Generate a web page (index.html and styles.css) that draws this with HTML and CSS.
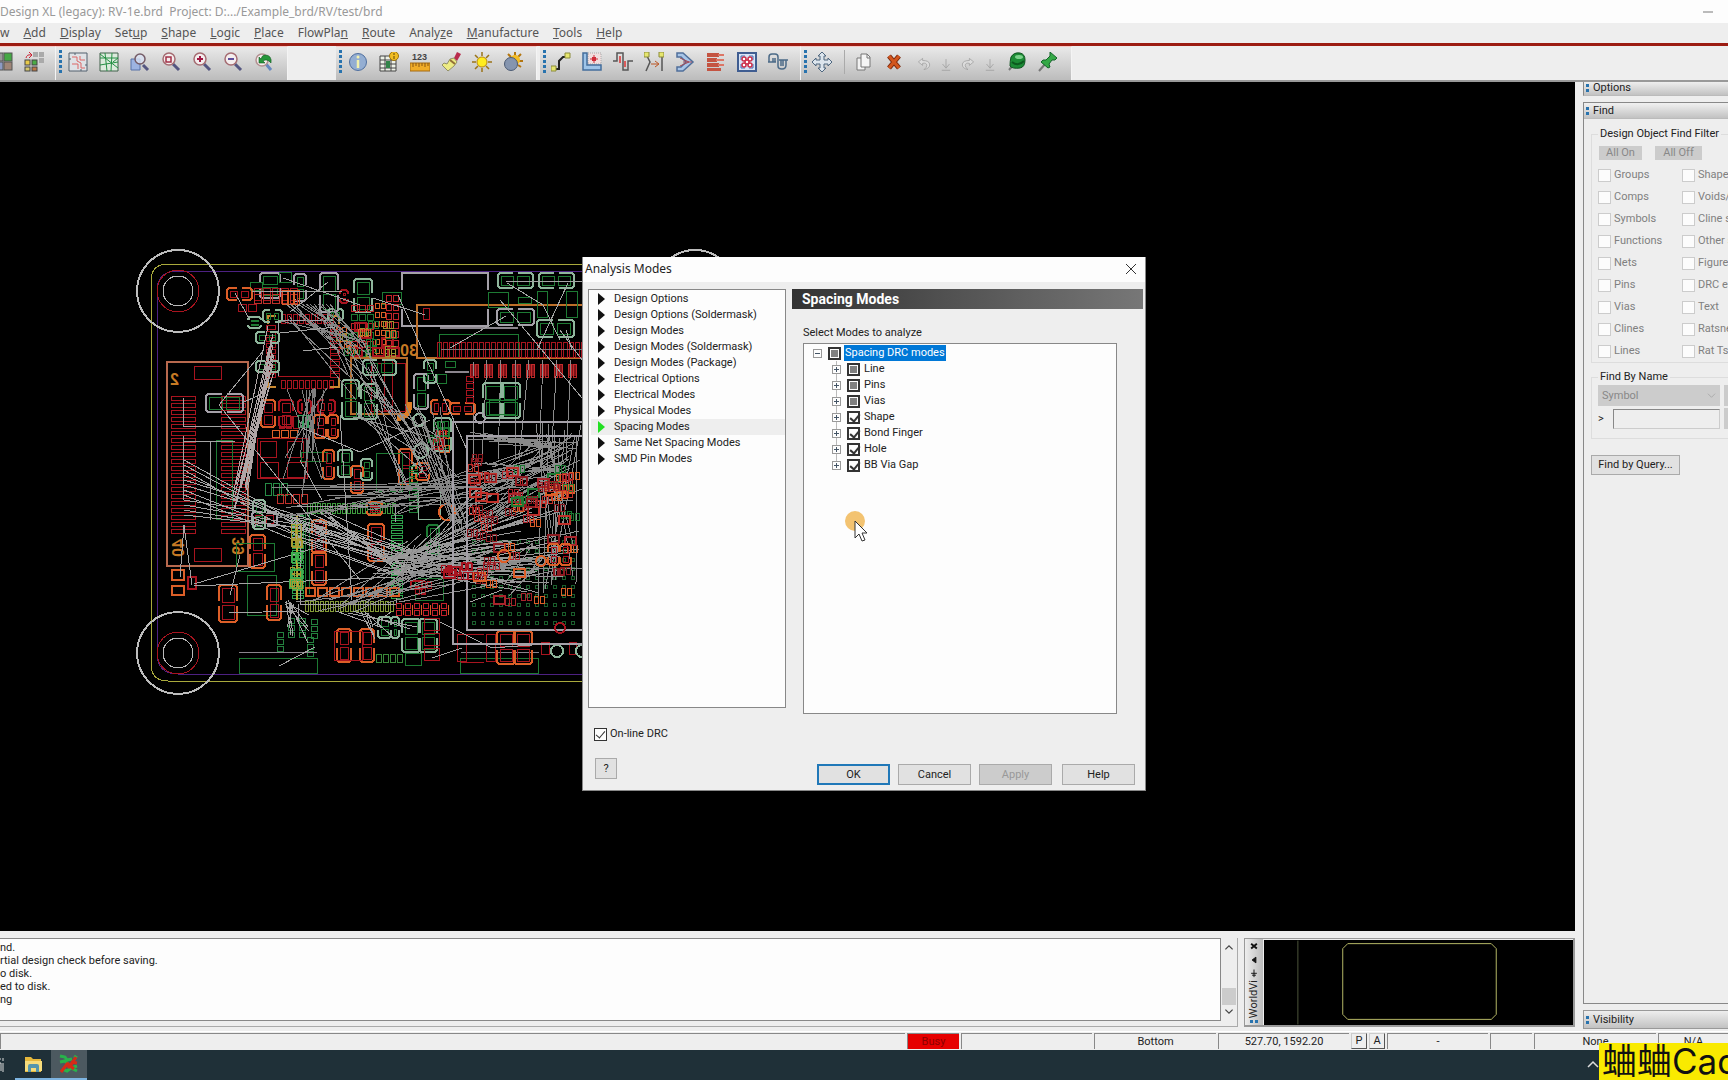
FILE: index.html
```html
<!DOCTYPE html>
<html lang="en">

<head>
    <meta charset="UTF-8">
    <title>RV-1e.brd</title>
    <link rel="stylesheet" href="styles.css">
</head>

<body>
    <header class="titlebar">
        <span>Design XL (legacy): RV-1e.brd&nbsp; Project: D:.../Example_brd/RV/test/brd</span>
        <button class="minimize" aria-label="Minimize"></button>
    </header>

    <nav class="menubar">
        <button>w</button>
        <button><u>A</u>dd</button>
        <button><u>D</u>isplay</button>
        <button>Set<u>u</u>p</button>
        <button><u>S</u>hape</button>
        <button><u>L</u>ogic</button>
        <button><u>P</u>lace</button>
        <button>FlowPla<u>n</u></button>
        <button><u>R</u>oute</button>
        <button>Analy<u>z</u>e</button>
        <button><u>M</u>anufacture</button>
        <button><u>T</u>ools</button>
        <button><u>H</u>elp</button>
    </nav>

    <div class="toolbars">
        <div class="toolbar toolbar-start">
            <button aria-label="Design mode"><svg viewBox="0 0 20 20"><g stroke="#555"><rect x="1" y="1" width="8" height="8" fill="#999"/><rect x="10" y="1" width="8" height="8" fill="#45a845"/><rect x="1" y="10" width="8" height="8" fill="#8d9bc4"/><rect x="10" y="10" width="8" height="8" fill="#a08678"/></g></svg></button>
            <button aria-label="Placement mode"><svg viewBox="0 0 20 20"><path d="M9 0h5v5H9zM15 0h5v5h-5zM15 6h5v5h-5z" fill="#aaa"/><g stroke="#444"><rect x="1" y="8" width="5" height="5" fill="#e7c948"/><rect x="8" y="8" width="5" height="5" fill="#4bab45"/><rect x="1" y="15" width="5" height="4" fill="#d3c56d"/><rect x="8" y="15" width="5" height="4" fill="#bd7845"/></g><path d="M2 6q1-4 5-3M5 0l3 3-3 3" fill="none" stroke="#c23"/></svg></button>
        </div>
        <div class="toolbar">
            <i class="grip"></i>
            <button aria-label="Unrats all"><svg viewBox="0 0 20 20"><path d="M1 1h18v18H1z" fill="#dfe2e6" stroke="#52616f"/><path d="M4 5h5v4M12 4v4h5M4 12h6v5M13 11v5h4M9 9l4 2" fill="none" stroke="#d66"/><path d="M1 7h2M7 1v2M17 13h2M13 17v2" stroke="#52616f"/></svg></button>
            <button aria-label="Rats all"><svg viewBox="0 0 20 20"><path d="M1 1h18v18H1z" fill="#dcebdd" stroke="#40604b"/><path d="M1 6h18M1 13l18-3M6 1l2 18M13 1l-1 18M1 2l18 14M14 10l5-4" fill="none" stroke="#249044"/></svg></button>
            <button aria-label="Zoom points"><svg viewBox="0 0 20 20"><path d="M1 7h9v11H1z" fill="#9db4e2" stroke="#5873a8"/><path d="M13 13l5 5" stroke="#545681" stroke-width="3"/><circle cx="10" cy="7" r="5" fill="#d8e1f2" fill-opacity=".8" stroke="#755c67" stroke-width="1.500"/></svg></button>
            <button aria-label="Zoom fit"><svg viewBox="0 0 20 20"><path d="M12 12l6 6" stroke="#545681" stroke-width="3"/><circle cx="8" cy="7" r="6" fill="#f4eeee" stroke="#a56c72" stroke-width="1.500"/><path d="M5 5h5v5H5z" fill="none" stroke="#a23048" stroke-width="1.500"/></svg></button>
            <button aria-label="Zoom in"><svg viewBox="0 0 20 20"><path d="M12 12l6 6" stroke="#545681" stroke-width="3"/><circle cx="8" cy="7" r="6" fill="#f4eeee" stroke="#a56c72" stroke-width="1.500"/><path d="M5 7h6M8 4v6" stroke="#a21742" stroke-width="2"/></svg></button>
            <button aria-label="Zoom out"><svg viewBox="0 0 20 20"><path d="M12 12l6 6" stroke="#545681" stroke-width="3"/><circle cx="8" cy="7" r="6" fill="#f4eeee" stroke="#a56c72" stroke-width="1.500"/><path d="M5 7h6" stroke="#5f4e9d" stroke-width="2"/></svg></button>
            <button aria-label="Zoom previous"><svg viewBox="0 0 20 20"><path d="M12 12l5 6" stroke="#6687bf" stroke-width="3"/><circle cx="8" cy="8" r="6" fill="#f4eeee" stroke="#b39091" stroke-width="1.500"/><path d="M5 5v6h6L9 9q4-3 8 2 1-8-6-8-3 0-4 4z" fill="#25963a" stroke="#155d25" stroke-width=".6"/></svg></button>
        </div>
        <div class="toolbar-gap"></div>
        <div class="toolbar">
            <i class="grip"></i>
            <button aria-label="Show element"><svg viewBox="0 0 20 20"><circle cx="10" cy="10" r="8.500" fill="#94aed2" stroke="#4f6f9f"/><circle cx="10" cy="5" r="1.500" fill="#f4f2ac"/><path d="M10 8v8" stroke="#f4f2ac" stroke-width="2.500"/></svg></button>
            <button aria-label="Constraint manager"><svg viewBox="0 0 20 20"><path d="M1 4h16v15H1z" fill="#edf1e7" stroke="#444"/><path d="M1 8h16M1 12h16M1 16h16M6 4v15M12 4v15" stroke="#444"/><path d="M7 9h4v7H7z" fill="#328548"/><circle cx="15" cy="4" r="4.500" fill="#f1bd23" stroke="#9b7310"/><path d="M15 1v2M15 4v3" stroke="#5f4607"/></svg></button>
            <button aria-label="Measure"><svg viewBox="0 0 20 20"><text x="2" y="8" class="measure-text">123</text><path d="M0 11h20v8H0z" fill="#f0ac28" stroke="#a46b13"/><path d="M3 11v4M6 11v3M9 11v4M12 11v3M15 11v4M18 11v3" stroke="#885412"/></svg></button>
            <button aria-label="Color"><svg viewBox="0 0 20 20"><path d="M13 6l3-6 4 2-4 7z" fill="#b92c4d"/><path d="M9 7l4-1 3 4-3 4-6 5-6-6 2-2 3 1z" fill="#edeb84" stroke="#716f4a" stroke-width=".7"/><path d="M9 8l5 4" stroke="#947137" stroke-width="2"/></svg></button>
            <button aria-label="Shadow on"><svg viewBox="0 0 20 20"><path d="M10 0v4M10 16v4M0 10h4M16 10h4M3 3l3 3M14 14l3 3M3 17l3-3M14 6l3-3" stroke="#9a7318" stroke-width="1.500"/><circle cx="10" cy="10" r="5" fill="#ffec20" stroke="#bd8c0c"/></svg></button>
            <button aria-label="Shadow off"><svg viewBox="0 0 20 20"><path d="M12 0v4M16 9h4M5 2l3 3M15 5l3-3M15 13l3 2" stroke="#b3750f" stroke-width="2"/><circle cx="12" cy="8" r="5" fill="#f4bd24"/><circle cx="8" cy="12" r="6.500" fill="#8595af" stroke="#4c5b74"/></svg></button>
        </div>
        <div class="toolbar toolbar-route">
            <i class="grip"></i>
            <button aria-label="Add connect"><svg viewBox="0 0 20 20"><path d="M4 17h4V9l4-4h4" fill="none" stroke="#222" stroke-width="2"/><path d="M0 14h5v5H0zM14 1h5v5h-5z" fill="#e6e66e" stroke="#8b8b3a"/></svg></button>
            <button aria-label="Slide"><svg viewBox="0 0 20 20"><path d="M6 1h13v11H6z" fill="#f0dede" stroke="#aaa" stroke-dasharray="1 1"/><path d="M1 1h4v12h14v5H1z" fill="#9ec4e8" stroke="#446e9c" stroke-width="1.500"/><path d="M12 3v8M8 7h8" stroke="#d02c38"/><path d="M10 5h4v4h-4z" fill="#d02c38"/></svg></button>
            <button aria-label="Delay tune"><svg viewBox="0 0 20 20"><path d="M0 9h4V1h6v17h5V9h5" fill="none" stroke="#555" stroke-width="1.500"/><path d="M7 4v7M12 9v6" stroke="#d33" stroke-width="1.500"/></svg></button>
            <button aria-label="Custom smooth"><svg viewBox="0 0 20 20"><path d="M3 4l3 6-4 9M18 4v15" fill="none" stroke="#555" stroke-width="1.500"/><path d="M0 0h5v5H0zM15 0h5v5h-5z" fill="#e6e66e" stroke="#8b8b3a"/><path d="M7 12h7M11 9l4 3-4 3" fill="none" stroke="#b52"/></svg></button>
            <button aria-label="Vertex"><svg viewBox="0 0 20 20"><path d="M2 1h6l10 9-10 9H2v-4h4l5-5-5-5H2z" fill="#a8c5e8" stroke="#506f9a" stroke-width="1.500"/><path d="M5 6l9 4-9 4M8 10h9" fill="none" stroke="#a34b59"/></svg></button>
            <button aria-label="Spread"><svg viewBox="0 0 20 20"><path d="M1 1h12v4H1zM1 6h10v4H1zM1 11h12v4H1zM1 16h14v3H1z" fill="#c45442"/><path d="M12 3h6M10 8h8M12 13h6" stroke="#dc7565" stroke-width="2"/></svg></button>
            <button aria-label="Fanout"><svg viewBox="0 0 20 20"><path d="M1 1h18v18H1z" fill="#d8e4f5" stroke="#3f5d91" stroke-width="2"/><path d="M4 8V4h4M12 4h4v4M4 12v4h4M12 16h4v-4" fill="none" stroke="#456db2"/><g fill="#fff" stroke="#ce304b" stroke-width="1.500"><circle cx="7" cy="7" r="2"/><circle cx="13" cy="7" r="2"/><circle cx="7" cy="13" r="2"/><circle cx="13" cy="13" r="2"/><circle cx="10" cy="10" r="2"/></g></svg></button>
            <button aria-label="Phase tune"><svg viewBox="0 0 20 20"><path d="M1 10V5q0-3 3-3h3q3 0 3 3v9q0 3 4 3t4-4V8M5 10V6M7 10V6M13 8v6M15 8v6M0 10h8M11 8h9" fill="none" stroke="#4b6a87" stroke-width="1.500"/></svg></button>
        </div>
        <div class="toolbar toolbar-edit">
            <i class="grip"></i>
            <button aria-label="Move"><svg viewBox="0 0 20 20"><path d="M10 0l4 4h-2v4h4V6l4 4-4 4v-2h-4v4h2l-4 4-4-4h2v-4H4v2l-4-4 4-4v2h4V4H6z" fill="#dce5ed" stroke="#4f677f"/></svg></button>
            <i class="separator"></i>
            <button aria-label="Copy"><svg viewBox="0 0 20 20"><path d="M4 6h8v12H4z" fill="#f2f2f2" stroke="#777"/><path d="M8 2h6l3 3v10H8z" fill="#f5f5f5" stroke="#777"/><path d="M14 2v4h3" fill="none" stroke="#777"/></svg></button>
            <button aria-label="Delete"><svg viewBox="0 0 20 20"><path d="M5 4l10 12M15 4L5 16" stroke="#7a2a10" stroke-width="5"/><path d="M5 4l10 12M15 4L5 16" stroke="#d3561d" stroke-width="3"/></svg></button>
            <span class="history">
                <button aria-label="Undo"><svg viewBox="0 0 20 20"><path d="M8 2L2 7l6 5V9q6-1 6 3 0 3-4 6 9-2 8-8-1-5-10-5z" fill="#ddd" stroke="#999"/></svg></button>
                <button aria-label="Undo list"><svg viewBox="0 0 20 20"><path d="M10 3v12M5 10l5 6 5-6M4 19h12" fill="none" stroke="#999"/></svg></button>
                <button aria-label="Redo"><svg viewBox="0 0 20 20"><path d="M12 2l6 5-6 5V9q-6-1-6 3 0 3 4 6-9-2-8-8 1-5 10-5z" fill="#ddd" stroke="#999"/></svg></button>
                <button aria-label="Redo list"><svg viewBox="0 0 20 20"><path d="M10 3v12M5 10l5 6 5-6M4 19h12" fill="none" stroke="#999"/></svg></button>
            </span>
            <button aria-label="Done"><svg viewBox="0 0 20 20"><path d="M2 18l5-6" stroke="#777" stroke-width="2"/><path d="M4 5q3-5 9-4 5 1 5 7 0 7-5 8-8 1-10-2 0-5 1-9z" fill="#1c8b35" stroke="#105320"/><path d="M5 10q6 5 12-1" fill="none" stroke="#0c5a1e" stroke-width="2"/><ellipse cx="12" cy="5" rx="4" ry="2" fill="#7bd18a"/></svg></button>
            <button aria-label="Fix"><svg viewBox="0 0 20 20"><path d="M1 19l7-8" stroke="#777" stroke-width="2"/><path d="M12 0l7 6-2 2h-3l-3 4 1 3-2 1-7-6 2-2h3l4-4z" fill="#35a947" stroke="#14652a"/></svg></button>
        </div>
    </div>

    <main class="workspace">
        <div class="editor">
            <svg id="board" class="board"></svg>
            <div class="dock">
                <section class="console">
                    <div class="log" role="log">
                        <div>nd.</div>
                        <div>rtial design check before saving.</div>
                        <div>o disk.</div>
                        <div>ed to disk.</div>
                        <div>ng</div>
                    </div>
                    <div class="scrollbar">
                        <svg viewBox="0 0 10 10"><path d="M2 7l3-3 3 3" /></svg>
                        <i class="thumb"></i>
                        <svg viewBox="0 0 10 10"><path d="M2 3l3 3 3-3" /></svg>
                    </div>
                </section>
                <section class="worldview">
                    <div class="worldview-bar">
                        <svg viewBox="0 0 10 40"><path d="M2 3l6 5M8 3L2 8" stroke="#111" stroke-width="2"/><path d="M7 17v6l-4-3zM5 30v8M2 34h6M3 36h4" fill="#111" stroke="#111"/></svg>
                        <span>WorldVi</span>
                        <i class="dots"></i>
                    </div>
                    <svg class="worldview-map" viewBox="0 0 310 84">
                        <path d="M34 0v84" stroke="#4c543a" />
                        <path d="M84 3h144l5 5v66l-5 5H84l-5-5V8z" fill="none" stroke="#b5b765" />
                    </svg>
                </section>
            </div>
        </div>

        <aside class="sidebar">
            <h2 class="panel-title panel-options"><i class="dots"></i>Options</h2>
            <section class="find-panel">
                <h2 class="panel-title"><i class="dots"></i>Find</h2>
                <div class="find-body">
                    <fieldset class="filter">
                        <legend>Design Object Find Filter</legend>
                        <div class="filter-buttons">
                            <button disabled>All On</button>
                            <button disabled>All Off</button>
                        </div>
                        <div class="filter-grid">
                            <label><input type="checkbox" disabled>Groups</label>
                            <label><input type="checkbox" disabled>Shapes</label>
                            <label><input type="checkbox" disabled>Comps</label>
                            <label><input type="checkbox" disabled>Voids/Cavities</label>
                            <label><input type="checkbox" disabled>Symbols</label>
                            <label><input type="checkbox" disabled>Cline segs</label>
                            <label><input type="checkbox" disabled>Functions</label>
                            <label><input type="checkbox" disabled>Other segs</label>
                            <label><input type="checkbox" disabled>Nets</label>
                            <label><input type="checkbox" disabled>Figures</label>
                            <label><input type="checkbox" disabled>Pins</label>
                            <label><input type="checkbox" disabled>DRC errors</label>
                            <label><input type="checkbox" disabled>Vias</label>
                            <label><input type="checkbox" disabled>Text</label>
                            <label><input type="checkbox" disabled>Clines</label>
                            <label><input type="checkbox" disabled>Ratsnests</label>
                            <label><input type="checkbox" disabled>Lines</label>
                            <label><input type="checkbox" disabled>Rat Ts</label>
                        </div>
                    </fieldset>
                    <fieldset class="by-name">
                        <legend>Find By Name</legend>
                        <div class="by-name-row">
                            <div class="select-box">
                                <select aria-label="Object type" disabled><option>Symbol</option></select>
                                <svg viewBox="0 0 10 10"><path d="M1 3l4 4 4-4" /></svg>
                            </div>
                            <button disabled aria-label="Name or list"></button>
                        </div>
                        <div class="by-name-row">
                            <label for="findName">&gt;</label>
                            <input type="text" id="findName">
                            <button disabled aria-label="More"></button>
                        </div>
                    </fieldset>
                    <button class="query-button">Find by Query...</button>
                </div>
            </section>
            <h2 class="panel-title panel-visibility"><i class="dots"></i>Visibility</h2>
        </aside>
    </main>

    <footer class="statusbar">
        <span class="cell cell-fill"></span>
        <span class="cell busy">Busy</span>
        <span class="cell cell-wide"></span>
        <span class="cell cell-layer">Bottom</span>
        <span class="cell cell-wide">527.70, 1592.20</span>
        <button>P</button>
        <button>A</button>
        <span class="cell cell-mode">-</span>
        <span class="cell cell-short"></span>
        <span class="cell cell-layer">None</span>
        <span class="cell cell-na">N/A</span>
    </footer>

    <div class="taskbar">
        <button class="task task-view" aria-label="Task view"><svg viewBox="0 0 4 20"><path d="M0 4h1M0 8h1v8M3 3v3M3 8v9" stroke="#ddd" fill="none"/></svg></button>
        <button class="task task-open" aria-label="File Explorer"><svg viewBox="0 0 20 20"><path d="M2 3h6l2 2h8v13H2z" fill="#e6b83c"/><path d="M2 7h17v10H2z" fill="#f6dc7c"/><path d="M5 18v-6q0-2 2-2h7q2 0 2 2v6h-3v-4H8v4z" fill="#5496ad"/></svg></button>
        <button class="task task-active" aria-label="PCB Editor"><svg viewBox="0 0 20 20"><path d="M1 2l5 1 2 3 5-1M1 8l5-1 3 3M12 14l6-2M3 15l5 2 4-3 6 3M15 2l3 2" fill="none" stroke="#28b34b" stroke-width="3"/><path d="M2 18l6-8 4 1 5-8M8 9l7 6M9 14l4-5M12 8l6 1" stroke="#d62a17" stroke-width="3" fill="none"/></svg></button>
        <svg class="tray-arrow" viewBox="0 0 12 12"><path d="M1 8l5-5 5 5" fill="none" stroke="#ddd" stroke-width="1.500"/></svg>
    </div>

    <div class="watermark">蛐蛐Cad</div>

    <form class="dialog" role="dialog" aria-labelledby="dialogTitle">
        <div class="dialog-title">
            <span id="dialogTitle">Analysis Modes</span>
            <button type="button" aria-label="Close"><svg viewBox="0 0 12 12"><path d="M1 1l10 10M11 1L1 11" stroke="#333" /></svg></button>
        </div>
        <div class="dialog-body">
            <div class="dialog-left">
                <ul class="mode-list">
                    <li>Design Options</li>
                    <li>Design Options (Soldermask)</li>
                    <li>Design Modes</li>
                    <li>Design Modes (Soldermask)</li>
                    <li>Design Modes (Package)</li>
                    <li>Electrical Options</li>
                    <li>Electrical Modes</li>
                    <li>Physical Modes</li>
                    <li class="current">Spacing Modes</li>
                    <li>Same Net Spacing Modes</li>
                    <li>SMD Pin Modes</li>
                </ul>
                <label class="online"><input type="checkbox" checked>On-line DRC</label>
                <button type="button" class="hint">?</button>
            </div>
            <div class="dialog-right">
                <h1>Spacing Modes</h1>
                <p>Select Modes to analyze</p>
                <ul class="tree">
                    <li><i class="expander minus"></i><label><input type="checkbox" class="partial"><span class="selected">Spacing DRC modes</span></label>
                        <ul>
                            <li><i class="expander"></i><label><input type="checkbox" class="partial"><span>Line</span></label></li>
                            <li><i class="expander"></i><label><input type="checkbox" class="partial"><span>Pins</span></label></li>
                            <li><i class="expander"></i><label><input type="checkbox" class="partial"><span>Vias</span></label></li>
                            <li><i class="expander"></i><label><input type="checkbox" checked><span>Shape</span></label></li>
                            <li><i class="expander"></i><label><input type="checkbox" checked><span>Bond Finger</span></label></li>
                            <li><i class="expander"></i><label><input type="checkbox" checked><span>Hole</span></label></li>
                            <li><i class="expander"></i><label><input type="checkbox" checked><span>BB Via Gap</span></label></li>
                        </ul>
                    </li>
                </ul>
                <div class="dialog-buttons">
                    <button type="button" class="default">OK</button>
                    <button type="button">Cancel</button>
                    <button type="button" disabled>Apply</button>
                    <button type="button" class="help">Help</button>
                </div>
            </div>
        </div>
    </form>

    <svg class="cursor" viewBox="0 0 24 32"><circle cx="10" cy="10" r="10" fill="#f3c371"/><path d="M10 10v17l4-4 3 7 3-1-3-7h5z" fill="#fff" stroke="#333"/></svg>

    <script src="board.js"></script>
</body>

</html>
```

FILE: styles.css
```css
* {
    box-sizing: border-box;
}

body {
    margin: 0;
    height: 100vh;
    display: flex;
    flex-direction: column;
    overflow: hidden;
    background: #eee;
    color: #222;
    font: 11px/16px Roboto, "Liberation Sans", sans-serif;
}

button,
input,
select {
    font: inherit;
    color: inherit;
    margin: 0;
    padding: 0;
}

h1,
h2,
p,
ul {
    margin: 0;
    padding: 0;
    font: inherit;
    list-style: none;
}

svg {
    display: block;
}

/* window frame */
.titlebar {
    height: 23px;
    flex: none;
    display: flex;
    justify-content: space-between;
    align-items: center;
    background: #fdfdfd;
    color: #999;
    font: 12px/16px "Noto Sans", sans-serif;
    white-space: nowrap;
}

.minimize {
    width: 10px;
    height: 2px;
    margin-right: 15px;
    border: none;
    background: #bbb;
}

.menubar {
    height: 20px;
    flex: none;
    display: flex;
    align-items: center;
    gap: 14px;
    font: 12px/16px "Noto Sans", sans-serif;
}

.menubar button {
    border: none;
    background: none;
    color: #555;
}

.toolbars {
    height: 39px;
    flex: none;
    display: flex;
    border-top: 3px solid #9c1c12;
    border-bottom: 2px solid #999;
}

.toolbar {
    display: flex;
    align-items: center;
    padding: 0 8px 3px 0;
    border-top: 1px solid #f9c9c6;
    border-right: 1px solid #f4f4f4;
    background: linear-gradient(#e9e9e9, #bcbcbc);
}

.toolbar-start {
    padding-right: 9px;
}

.toolbar-gap {
    width: 48px;
}

.toolbar-route {
    margin-left: 3px;
    padding-right: 7px;
}

.toolbar button {
    width: 31px;
    height: 24px;
    display: flex;
    align-items: center;
    justify-content: center;
    border: none;
    background: none;
}

.toolbar-start button {
    width: 24px;
}

.toolbar-start button:first-child {
    justify-content: flex-end;
    width: 14px;
    margin-right: 8px;
    overflow: hidden;
}

.toolbar svg {
    width: 20px;
    height: 20px;
    flex: none;
}

.toolbar-route .grip,
.toolbar-edit .grip {
    margin-right: -1px;
}

.history {
    display: flex;
    margin-left: 4px;
}

.history button {
    width: 22px;
}

.history svg {
    width: 14px;
    height: 14px;
    margin-top: 3px;
}

.grip {
    width: 3px;
    height: 24px;
    margin-left: 3px;
    background: repeating-linear-gradient(#2873ae 0 3px, transparent 3px 5px);
}

.separator {
    width: 1px;
    height: 24px;
    margin: 0 2px 0 7px;
    background: #aaa;
}

.measure-text {
    font: bold 9px "Liberation Sans", sans-serif;
    fill: #444;
}

/* drawing area */
.workspace {
    flex: 1;
    min-height: 0;
    display: flex;
    gap: 8px;
}

.editor {
    flex: 1;
    min-width: 0;
    display: flex;
    flex-direction: column;
}

.board {
    flex: 1;
    min-height: 0;
    width: 100%;
    background: #000;
}

.board-text {
    font: bold 16px "Liberation Sans", sans-serif;
    fill: #c77a24;
}

.dock {
    height: 100px;
    flex: none;
    display: flex;
    gap: 6px;
    padding: 7px 0 4px;
}

.console {
    flex: 1;
    display: flex;
    padding-bottom: 5px;
    border-right: 1px solid #aaa;
    border-bottom: 1px solid #aaa;
}

.log {
    flex: 1;
    padding-top: 2px;
    border: solid #888;
    border-width: 1px 1px 1px 0;
    background: #fdfdfd;
    line-height: 13px;
}

.scrollbar {
    width: 16px;
    display: flex;
    flex-direction: column;
    align-items: center;
    padding: 3px 0;
}

.scrollbar svg {
    width: 12px;
    height: 12px;
    fill: none;
    stroke: #444;
}

.thumb {
    width: 14px;
    height: 17px;
    margin: auto 0 1px;
    background: #ccc;
}

.worldview {
    width: 331px;
    display: flex;
    border: solid #999;
    border-width: 1px 2px 2px 1px;
}

.worldview-bar {
    width: 18px;
    display: flex;
    flex-direction: column;
    align-items: center;
    justify-content: space-between;
    padding: 2px 0;
    background: linear-gradient(90deg, #eee, #bbb);
}

.worldview-bar svg {
    width: 10px;
    height: 38px;
}

.worldview-bar span {
    writing-mode: vertical-rl;
    transform: rotate(180deg);
    line-height: 12px;
}

.worldview-map {
    flex: 1;
    min-width: 0;
    margin: 1px 0 0 1px;
    background: #000;
}

.worldview-bar .dots {
    width: 8px;
    height: 3px;
    background: linear-gradient(90deg, #2873ae 0 3px, transparent 3px 5px, #2873ae 5px);
}

/* right side */
.sidebar {
    width: 145px;
    flex: none;
    display: flex;
    flex-direction: column;
    gap: 6px;
    padding-bottom: 2px;
    overflow: hidden;
    white-space: nowrap;
}

.dots {
    width: 3px;
    height: 8px;
    background: linear-gradient(#2873ae 0 3px, transparent 3px 5px, #2873ae 5px);
}

.panel-title {
    height: 15px;
    flex: none;
    display: flex;
    align-items: center;
    gap: 4px;
    padding-left: 2px;
    border-bottom: 1px solid #bbb;
    background: linear-gradient(#eee, #c2c2c2);
}

.panel-options {
    height: 14px;
    padding-bottom: 2px;
    border-left: 1px solid #888;
}

.find-panel {
    flex: 1;
    padding-top: 1px;
    border: solid #888;
    border-width: 1px 0 1px 1px;
}

.panel-visibility {
    height: 19px;
    border: solid #999;
    border-width: 1px 0 1px 1px;
}

.find-body {
    width: 240px;
    padding: 7px 0 0 7px;
}

fieldset {
    margin: 0 0 6px;
    padding: 0 0 0 6px;
    border: 1px solid #ddd;
}

legend {
    padding: 0 2px;
    color: #222;
}

.filter-buttons {
    display: flex;
    gap: 13px;
    padding: 4px 0 4px 1px;
}

.filter-buttons button {
    width: 43px;
    height: 14px;
    border: none;
    background: #ccc;
    color: #888;
    line-height: 14px;
}

.filter-buttons button + button {
    width: 47px;
}

.filter-grid {
    display: grid;
    grid-template-columns: 84px 1fr;
    grid-auto-rows: 22px;
    color: #808080;
}

.filter-grid label {
    display: flex;
    align-items: center;
    gap: 3px;
}

.filter-grid input {
    appearance: none;
    width: 13px;
    height: 13px;
    border: 1px solid #ccc;
    background: #fcfcfc;
}

.by-name {
    height: 70px;
    margin-bottom: 16px;
}

.by-name-row {
    display: flex;
    align-items: center;
    gap: 4px;
    margin-bottom: 2px;
}

.by-name-row button {
    width: 60px;
    height: 21px;
    border: none;
    background: #ccc;
}

.select-box {
    position: relative;
    width: 122px;
    color: #888;
}

.select-box select {
    appearance: none;
    display: block;
    width: 100%;
    height: 21px;
    padding-left: 4px;
    border: none;
    background: #ccc;
    opacity: 1;
}

.select-box svg {
    position: absolute;
    top: 6px;
    right: 4px;
    width: 9px;
    fill: none;
    stroke: #aaa;
}

.by-name-row label {
    width: 11px;
}

.by-name-row input {
    width: 107px;
    height: 20px;
    border: 1px solid #ccc;
    border-top-color: #888;
    border-left-color: #888;
    background: #eee;
}

.query-button {
    width: 89px;
    height: 20px;
    border: 1px solid #aaa;
    background: #e1e1e1;
}

/* bottom bars */
.statusbar {
    height: 19px;
    flex: none;
    display: flex;
    gap: 2px;
    padding: 1px 0 1px 0;
    border-top: 1px solid #fff;
    line-height: 15px;
}

.cell {
    border: solid #888;
    border-width: 1px 0 0 1px;
    text-align: center;
}

.cell-fill {
    flex: 1;
}

.busy {
    width: 52px;
    background: #e60000;
    color: #8b0000;
}

.cell-wide {
    width: 131px;
}

.cell-layer {
    width: 122px;
}

.cell-mode {
    width: 101px;
}

.cell-short {
    width: 42px;
}

.cell-na {
    width: 70px;
}

.statusbar button {
    width: 16px;
    border: 1px solid #ccc;
    border-right-color: #555;
    border-bottom-color: #555;
    background: #eee;
    line-height: 14px;
}

.taskbar {
    height: 30px;
    flex: none;
    display: flex;
    background: #1f3038;
}

.task {
    width: 36px;
    display: flex;
    align-items: center;
    justify-content: center;
    border: none;
    background: none;
}

.task svg {
    height: 20px;
    width: 20px;
}

.task-view {
    width: 15px;
    justify-content: flex-start;
}

.task-view svg {
    width: 4px;
}

.task-open {
    border-bottom: 2px solid #7db4e0;
}

.task-active {
    border-bottom: 2px solid #7db4e0;
    background: #4c5960;
}

.tray-arrow {
    width: 12px;
    margin-left: auto;
    margin-right: 129px;
}

.watermark {
    position: absolute;
    right: 0;
    bottom: 0;
    width: 129px;
    height: 37px;
    padding-left: 3px;
    overflow: hidden;
    background: #f9ea00;
    color: #111;
    font: 35px/36px Inter, "Noto Sans CJK SC", sans-serif;
    white-space: nowrap;
}

/* analysis modes window */
.dialog {
    position: absolute;
    left: 582px;
    top: 257px;
    width: 564px;
    background: #eee;
    border: 1px solid #888;
    border-top: none;
    color: #222;
}

.dialog-title {
    height: 25px;
    display: flex;
    align-items: center;
    justify-content: space-between;
    padding: 0 8px 2px 2px;
    background: #fdfdfd;
    font: 12px/16px "Noto Sans", sans-serif;
}

.dialog-title button {
    border: none;
    background: none;
}

.dialog-title svg {
    width: 12px;
    height: 12px;
}

.dialog-body {
    display: flex;
    gap: 6px;
    padding: 7px 2px 5px 5px;
}

.dialog-left {
    width: 198px;
    display: flex;
    flex-direction: column;
    align-items: flex-start;
}

.mode-list {
    width: 100%;
    height: 419px;
    padding: 1px 0 0 2px;
    border: 1px solid #888;
    background: #fdfdfd;
}

.mode-list li {
    display: flex;
    align-items: center;
    gap: 9px;
    height: 16px;
    padding-left: 7px;
}

.mode-list li::before {
    content: "";
    border: solid transparent;
    border-width: 6px 0 6px 7px;
    border-left-color: #111;
}

.mode-list .current {
    background: #eee;
}

.mode-list .current::before {
    border-left-color: #22e022;
}

.online {
    display: flex;
    align-items: center;
    gap: 3px;
    margin: 18px 0 16px 6px;
}

.online input,
.tree input {
    appearance: none;
    position: relative;
    width: 13px;
    height: 13px;
    flex: none;
    border: 1px solid #333;
    background: #fdfdfd;
}

.tree input {
    border-width: 2px;
}

.online input:checked::after,
.tree input:checked::after {
    content: "";
    position: absolute;
    left: 3px;
    top: 0;
    width: 4px;
    height: 8px;
    border: solid #333;
    border-width: 0 1px 1px 0;
    transform: rotate(40deg);
}

.tree input:checked::after {
    top: -1px;
    border-width: 0 2px 2px 0;
}

.tree .partial {
    background: #808080;
    box-shadow: inset 0 0 0 1px #fdfdfd;
}

.hint {
    width: 22px;
    height: 21px;
    margin-left: 7px;
    border: 1px solid #aaa;
    background: #e1e1e1;
}

.dialog-right {
    flex: 1;
}

.dialog-right h1 {
    height: 20px;
    padding-left: 10px;
    background: linear-gradient(90deg, #333, #777);
    color: #fff;
    font-size: 14px;
    font-weight: bold;
    line-height: 20px;
}

.dialog-right p {
    padding: 16px 0 2px 11px;
}

.tree {
    width: 314px;
    height: 371px;
    margin-left: 11px;
    padding: 1px 0 0 9px;
    border: 1px solid #888;
    background: #fdfdfd;
}

.tree ul {
    margin-left: 19px;
    background: linear-gradient(#bbb, #bbb) 4px 0 / 1px 104px no-repeat;
}

.tree label {
    display: inline-flex;
    align-items: center;
    gap: 3px;
    height: 16px;
    vertical-align: top;
}

.tree label span {
    padding: 0 1px;
}

.tree .selected {
    background: #0078d7;
    color: #fff;
}

.expander {
    display: inline-block;
    width: 9px;
    height: 9px;
    margin: 4px 6px 0 0;
    border: 1px solid #999;
    vertical-align: top;
    background:
        linear-gradient(#456, #456) center / 5px 1px no-repeat,
        linear-gradient(#456, #456) center / 1px 5px no-repeat,
        #fdfdfd;
}

.expander.minus {
    background:
        linear-gradient(#456, #456) center / 5px 1px no-repeat,
        #fdfdfd;
}

.dialog-buttons {
    display: flex;
    justify-content: flex-end;
    gap: 8px;
    margin-top: 50px;
    padding-right: 8px;
}

.dialog-buttons button {
    width: 73px;
    height: 21px;
    border: 1px solid #aaa;
    background: #e1e1e1;
}

.dialog-buttons .default {
    border: 2px solid #2078b8;
}

.dialog-buttons button:disabled {
    background: #ccc;
    color: #999;
}

.dialog-buttons .help {
    margin-left: 2px;
}

.cursor {
    position: absolute;
    left: 845px;
    top: 511px;
    width: 24px;
    height: 32px;
    pointer-events: none;
}
```

FILE: board.js
```js
const RED = '#a8141f';
const ORANGE = '#dc5f28';
const GREEN = '#1d7a33';
const MINT = '#8fb69c';
const SILK = '#a5a1a9';
const RAT = '#a4a4a4';

let out = '';
let seed = 11;

function rand(a, b) {
    seed = (seed * 16807) % 2147483647;
    return Math.round(a + (b - a) * seed / 2147483647);
}

function path(d, color, width = 1) {
    out += `<path d="${d}" fill="none" stroke="${color}" stroke-width="${width}"/>`;
}

function box(x, y, w, h, color, width = 1) {
    path(`M${x} ${y}h${w}v${h}h${-w}z`, color, width);
}

function circle(x, y, r, color, width = 1) {
    out += `<circle cx="${x}" cy="${y}" r="${r}" fill="none" stroke="${color}" stroke-width="${width}"/>`;
}

function line(x1, y1, x2, y2, color = RAT) {
    path(`M${x1} ${y1}L${x2} ${y2}`, color);
}

// n pads from x,y with a step of dx,dy
function pads(x, y, w, h, dx, dy, n, color) {
    for (let i = 0; i < n; i++) box(x + dx * i, y + dy * i, w, h, color);
}

// two-pad part with brackets
function partV(x, y, w, h, pad, silk) {
    const p = Math.round(h / 2) - 3;
    box(x + 3, y + 3, w - 6, p - 2, pad);
    box(x + 3, y + p + 4, w - 6, p - 2, pad);
    path(`M${x} ${y + p}v${2 - p}l2-2h${w - 4}l2 2v${p - 2}`, silk, 2);
    path(`M${x} ${y + p + 5}v${p - 2}l2 2h${w - 4}l2-2v${2 - p}`, silk, 2);
}

function partH(x, y, w, h, pad, silk) {
    const p = Math.round(w / 2) - 3;
    box(x + 3, y + 3, p - 3, h - 6, pad);
    box(x + p + 4, y + 3, p - 3, h - 6, pad);
    path(`M${x + p} ${y}H${x + 2}l-2 2v${h - 4}l2 2h${p - 2}`, silk, 2);
    path(`M${x + p + 5} ${y}h${p - 2}l2 2v${h - 4}l-2 2h${2 - p}`, silk, 2);
}

// bundle of lines between two areas
function bundle(n, x1, y1, x2, y2, x3, y3, x4, y4, color) {
    for (let i = 0; i < n; i++) {
        line(rand(x1, x2), rand(y1, y2), rand(x3, x4), rand(y3, y4), color);
    }
}

// small pads scattered over a crowded area
function scatter(n, x1, y1, x2, y2, colors) {
    for (let i = 0; i < n; i++) {
        const color = colors[i % colors.length];
        const x = rand(x1, x2 - 12);
        const y = rand(y1, y2 - 10);
        if (i % 4 === 0) box(x, y, 11, 8, color, 2);
        else pads(x, y, 4, 7, 6, 0, 2, color);
    }
}

function label(text, x, y, turn) {
    out += `<text class="board-text" transform="translate(${x} ${y}) ${turn}">${text}</text>`;
}

// outline and mounting holes
path('M168 264H704q17 0 17 17V664q0 17-17 17H168q-17 0-17-17V281q0-17 17-17z', '#a9a93c');
path('M178 271H700q14 0 14 14V660q0 14-14 14H178q-21 0-21-21V291q0-20 21-20z', '#4d2182');
for (const [x, y] of [[178, 291], [178, 653], [695, 291], [695, 653]]) {
    circle(x, y, 41, '#bcbcbc', 2);
    circle(x, y, 21, RED);
    circle(x, y, 15, '#b8b8b8');
}

// left connector
box(167, 362, 81, 204, '#b8694e', 2);
box(194, 366, 27, 13, RED);
box(194, 548, 27, 13, RED);
pads(171, 396, 24, 4, 0, 7, 20, RED);
pads(221, 396, 24, 4, 0, 7, 20, RED);
box(216, 440, 16, 79, GREEN);
label('2', 179, 385, 'scale(-1 1)');
label('40', 172, 539, 'rotate(90) scale(1 -1) translate(0 12)');
label('39', 232, 537, 'rotate(90) scale(1 -1) translate(0 12)');
partH(206, 394, 38, 18, GREEN, SILK);

// quad package, upper
pads(281, 314, 4, 9, 6, 0, 9, RED);
pads(281, 380, 4, 8, 6, 0, 9, RED);
pads(266, 325, 9, 4, 0, 6, 9, RED);
pads(330, 325, 9, 4, 0, 6, 9, RED);
path('M278 376v-56h52', SILK);
path('M330 320v56h-52', RED);
path('M268 324v-8h8M330 316h9v8M268 378v9h8M330 387h9v-9', '#c98930', 2);

// quad package, lower
pads(307, 503, 3, 10, 5, 0, 18, '#3e9a3e');
pads(305, 601, 3, 10, 5, 0, 18, '#839a36');
pads(292, 515, 11, 3, 0, 5, 17, '#2fa24c');
pads(391, 515, 11, 3, 0, 5, 17, '#2fa24c');
path('M292 506h103v16M300 522v82h96v-6', SILK);
path('M297 516v84', '#b5a735', 2);
path('M305 514v80M309 514v80', GREEN);
for (let x = 306; x < 392; x += 12) box(x, 588, 9, 8, ORANGE, 2);

// top connector
path('M402 290v-17h86v17M402 309v17h86v-17', SILK, 2);
path('M582 305H417v53h165', '#bd6f29', 2);
path('M440 328h78M445 372h24', '#8b858d', 2);
box(439, 334, 79, 23, GREEN);
pads(437, 342, 4, 15, 6, 0, 25, RED);
line(441, 349, 582, 349, '#81777c');
for (let x = 470; x < 582; x += 14) {
    out += `<path d="M${x} 364h8v12h-8z" fill="#7d1218"/>`;
    pads(x, 364, 3, 13, 5, 0, 2, '#c22b2b');
    line(x + 3, 360, x - rand(-4, 9), 460, '#8c8c8c');
}
label('30', 418, 356, 'scale(-1 1)');
box(423, 308, 6, 11, RED);

// small parts round the top edge
partV(260, 273, 20, 26, GREEN, SILK);
partV(320, 273, 18, 40, GREEN, SILK);
partV(294, 274, 12, 28, GREEN, SILK);
box(250, 282, 12, 8, GREEN);
box(279, 272, 12, 10, GREEN);
partH(227, 288, 26, 12, RED, ORANGE);
pads(254, 288, 7, 12, 9, 0, 5, RED);
pads(254, 294, 7, 9, 9, 0, 5, '#c0302a');
pads(282, 290, 5, 14, 6, 0, 3, ORANGE);
pads(238, 304, 8, 7, 10, 0, 2, RED);
partV(248, 317, 13, 11, GREEN, MINT);
partH(256, 332, 24, 11, GREEN, MINT);
partH(256, 361, 24, 11, GREEN, MINT);
partH(263, 310, 20, 12, GREEN, MINT);
partH(328, 309, 16, 11, GREEN, MINT);
partV(354, 279, 18, 34, GREEN, MINT);
partV(340, 290, 8, 14, RED, RED);
partH(498, 273, 36, 15, GREEN, MINT);
partH(539, 273, 36, 15, GREEN, MINT);
partH(497, 309, 38, 16, GREEN, SILK);
partH(537, 320, 37, 17, GREEN, MINT);
box(488, 292, 20, 15, GREEN);
box(537, 291, 10, 26, GREEN);
box(566, 291, 11, 26, GREEN);
box(518, 297, 13, 6, GREEN);

// column between the packages and the top connector
box(382, 292, 19, 12, GREEN);
for (let y = 295; y < 346; y += 9) {
    pads(351, y + 10, 6, 6, 8, 0, 3, y % 2 ? '#c0252a' : GREEN);
    pads(386, y, 5, 6, 7, 0, 2, '#c0252a');
    pads(375, y + 8, 4, 5, 6, 0, 2, ORANGE);
}
scatter(24, 335, 320, 400, 365, [RED, ORANGE, GREEN, '#9d9330']);
box(351, 358, 56, 56, '#b76b2b', 2);
box(371, 363, 34, 48, RED);
box(384, 360, 8, 50, RED);
partV(342, 380, 17, 40, GREEN, MINT);
partV(361, 384, 16, 36, GREEN, MINT);
partH(363, 360, 33, 15, GREEN, MINT);
path('M409 402q3 14-12 17', '#df7e25', 5);
partV(414, 374, 14, 36, GREEN, SILK);
partV(424, 360, 12, 24, GREEN, MINT);
box(437, 374, 9, 9, GREEN);
box(445, 361, 10, 6, GREEN);
partH(431, 400, 20, 14, RED, ORANGE);
partH(450, 403, 26, 11, RED, ORANGE);
pads(466, 376, 7, 5, 0, 7, 4, RED);
partV(483, 383, 20, 36, GREEN, MINT);
partV(501, 383, 19, 36, GREEN, MINT);
box(489, 400, 26, 14, GREEN);
circle(419, 420, 6, MINT, 2);
circle(480, 418, 5, SILK, 2);
circle(421, 451, 7, MINT, 2);
circle(417, 469, 5, MINT, 2);
partV(434, 418, 17, 34, GREEN, MINT);
scatter(8, 428, 415, 452, 455, [RED, GREEN, ORANGE]);

// parts under the upper package
partV(261, 400, 14, 28, RED, ORANGE);
partV(279, 400, 14, 28, RED, RED);
partH(298, 400, 14, 13, RED, RED);
partH(318, 400, 17, 13, RED, RED);
pads(279, 416, 5, 12, 7, 0, 3, RED);
partV(314, 415, 12, 24, RED, ORANGE);
partV(328, 415, 10, 24, RED, ORANGE);
pads(298, 415, 4, 12, 5, 0, 3, '#34a05d');
pads(272, 430, 7, 7, 9, 0, 3, ORANGE);
box(257, 438, 50, 40, RED);
box(260, 441, 16, 16, RED);
box(287, 441, 16, 16, RED);
box(260, 462, 18, 15, RED);
box(287, 462, 18, 15, RED);
box(301, 452, 26, 9, GREEN);
partV(323, 450, 11, 30, RED, ORANGE);
partV(338, 450, 14, 28, GREEN, MINT);
partV(351, 466, 12, 28, RED, ORANGE);
partV(399, 449, 13, 35, RED, ORANGE);
partV(361, 459, 11, 22, GREEN, MINT);
box(376, 453, 26, 38, GREEN);
box(418, 483, 22, 36, MINT);
pads(409, 466, 8, 4, 0, 6, 8, GREEN);
partV(416, 463, 13, 18, RED, ORANGE);
circle(447, 512, 8, ORANGE, 2);
partV(367, 502, 15, 14, RED, ORANGE);
partV(312, 520, 14, 34, RED, ORANGE);
partV(312, 552, 14, 34, RED, ORANGE);
partV(368, 524, 16, 38, RED, ORANGE);
partV(427, 525, 12, 30, GREEN, GREEN);
box(415, 578, 28, 22, GREEN);
scatter(4, 410, 580, 435, 602, [RED]);

// parts round the lower package
partH(252, 512, 26, 14, RED, SILK);
partV(250, 535, 15, 33, RED, ORANGE);
partV(253, 500, 12, 30, GREEN, MINT);
box(236, 543, 38, 28, GREEN);
box(247, 575, 29, 40, GREEN);
pads(265, 483, 6, 12, 8, 0, 3, '#268b45');
pads(277, 494, 6, 9, 8, 0, 4, '#c0302a');
box(172, 570, 12, 10, ORANGE, 2);
box(172, 586, 12, 9, ORANGE, 2);
box(188, 577, 8, 12, RED, 2);
partV(219, 585, 18, 38, RED, ORANGE);
partV(267, 585, 14, 35, RED, ORANGE);
for (const [x, y] of [[277, 632], [288, 618], [299, 618], [307, 637], [311, 619]]) {
    pads(x, y, 6, 5, 0, 7, 3, '#23813e');
}
path('M239 652h78M461 652h78', '#8b858d');
box(239, 658, 78, 15, GREEN);
box(460, 658, 78, 15, GREEN);
partV(337, 629, 14, 34, RED, ORANGE);
partV(360, 629, 14, 34, RED, ORANGE);
box(334, 631, 28, 29, RED);
partV(378, 617, 13, 22, GREEN, MINT);
partV(391, 617, 8, 22, GREEN, MINT);
pads(376, 654, 5, 8, 7, 0, 4, '#3a8a3a');
for (let x = 396; x < 446; x += 9) {
    pads(x, 603, 5, 5, 0, 7, 2, '#c4202a');
    line(x + 7, 605, x + 7, 615, ORANGE);
}
partV(402, 619, 18, 34, GREEN, MINT);
partV(419, 619, 18, 34, GREEN, MINT);
box(405, 653, 16, 12, GREEN);
pads(424, 618, 15, 12, 0, 15, 3, RED);
pads(457, 634, 9, 27, 29, 0, 2, RED);
path('M461 634h23M461 662h23', RED);
partV(497, 631, 18, 34, RED, ORANGE);
partV(514, 631, 18, 34, RED, ORANGE);
box(541, 642, 8, 12, RED);
box(569, 642, 7, 12, RED);
circle(557, 651, 6, MINT, 2);
circle(582, 651, 6, MINT, 2);

// ball grid
for (let y = 542; y < 630; y += 9) {
    for (let x = 474; x < 582; x += 9) circle(x, y, 2, '#1b5f2d');
}

// ratsnest
bundle(14, 268, 325, 274, 385, 232, 475, 248, 510, '#b0a6a6');
for (let i = 0; i < 12; i++) {
    line(184, 460 + i * 5, 292 + rand(0, 60), 516 + rand(0, 32));
    line(286 + i * 4, 304, 330 + i * 3, 326 + rand(0, 30), '#888');
}
bundle(12, 280, 312, 336, 324, 342, 340, 372, 400, '#858585');
bundle(16, 346, 335, 372, 420, 400, 430, 460, 500, '#909090');
bundle(11, 283, 388, 330, 390, 275, 420, 350, 500, '#808080');
bundle(20, 280, 510, 330, 540, 390, 550, 420, 580);
bundle(28, 370, 548, 410, 575, 500, 530, 582, 600, '#999');
bundle(14, 398, 548, 420, 570, 453, 480, 582, 520, '#999');
bundle(20, 290, 585, 400, 612, 400, 530, 500, 590, '#8c8c8c');
bundle(12, 460, 430, 500, 450, 540, 440, 582, 450, '#888');
bundle(16, 467, 460, 500, 500, 530, 440, 582, 480, '#8c8c8c');
bundle(20, 250, 480, 400, 520, 400, 460, 582, 500, '#858585');
bundle(14, 453, 500, 500, 540, 540, 430, 582, 490, '#888');
bundle(14, 467, 560, 530, 600, 530, 540, 582, 570, '#8c8c8c');
bundle(12, 400, 400, 440, 430, 450, 520, 470, 540, '#858585');
bundle(10, 285, 600, 300, 605, 280, 615, 312, 645);
bundle(8, 335, 610, 395, 615, 370, 615, 430, 655);
bundle(12, 530, 420, 582, 440, 535, 520, 582, 600, '#8c8c8c');
for (const [x1, y1, x2, y2] of [
    [183, 398, 183, 426], [183, 426, 240, 426], [183, 441, 235, 441], [210, 441, 210, 520],
    [183, 436, 183, 500], [264, 350, 219, 405], [219, 405, 360, 580], [180, 577, 184, 525],
    [184, 525, 192, 585], [194, 584, 315, 548], [194, 586, 395, 577], [229, 613, 297, 611],
    [279, 666, 315, 647], [240, 555, 230, 595], [242, 403, 257, 396], [280, 333, 335, 327],
    [303, 351, 338, 347], [235, 293, 250, 320], [283, 278, 360, 305], [328, 282, 290, 312],
    [252, 291, 342, 291], [373, 298, 425, 315], [398, 295, 467, 450], [506, 316, 450, 348],
    [500, 300, 582, 398], [507, 283, 543, 305], [543, 305, 560, 340], [568, 283, 537, 350],
    [560, 330, 582, 360], [506, 281, 582, 281], [566, 330, 572, 350], [340, 415, 352, 600],
    [302, 428, 360, 452], [360, 452, 430, 420], [432, 658, 462, 648], [470, 602, 502, 590],
    [440, 622, 492, 648], [492, 648, 545, 644], [480, 560, 560, 540], [300, 460, 322, 500]
]) {
    line(x1, y1, x2, y2);
}

// parts over the ball grid
path('M582 422H453v222h129M582 436H467v194h115', SILK, 2);
scatter(46, 500, 462, 582, 530, ['#c0302a', '#a9242b', ORANGE, '#8d1a20', GREEN]);
scatter(20, 467, 450, 500, 545, ['#c0302a', '#8d1a20']);
scatter(22, 470, 535, 582, 610, ['#a9242b', '#8d1a20', ORANGE]);
scatter(8, 440, 560, 480, 582, [RED]);
circle(504, 556, 6, ORANGE, 2);
circle(541, 561, 5, ORANGE, 2);
circle(560, 628, 5, RED, 2);
partV(548, 544, 11, 22, RED, ORANGE);
partV(560, 544, 11, 22, RED, ORANGE);
scatter(16, 290, 515, 304, 610, ['#3eae4c', '#a99b31']);

// coordinates above are window ones, the drawing area starts 82 lower
document.getElementById('board').innerHTML = `<g transform="translate(0 -82)" shape-rendering="crispEdges">${out}</g>`;
```
